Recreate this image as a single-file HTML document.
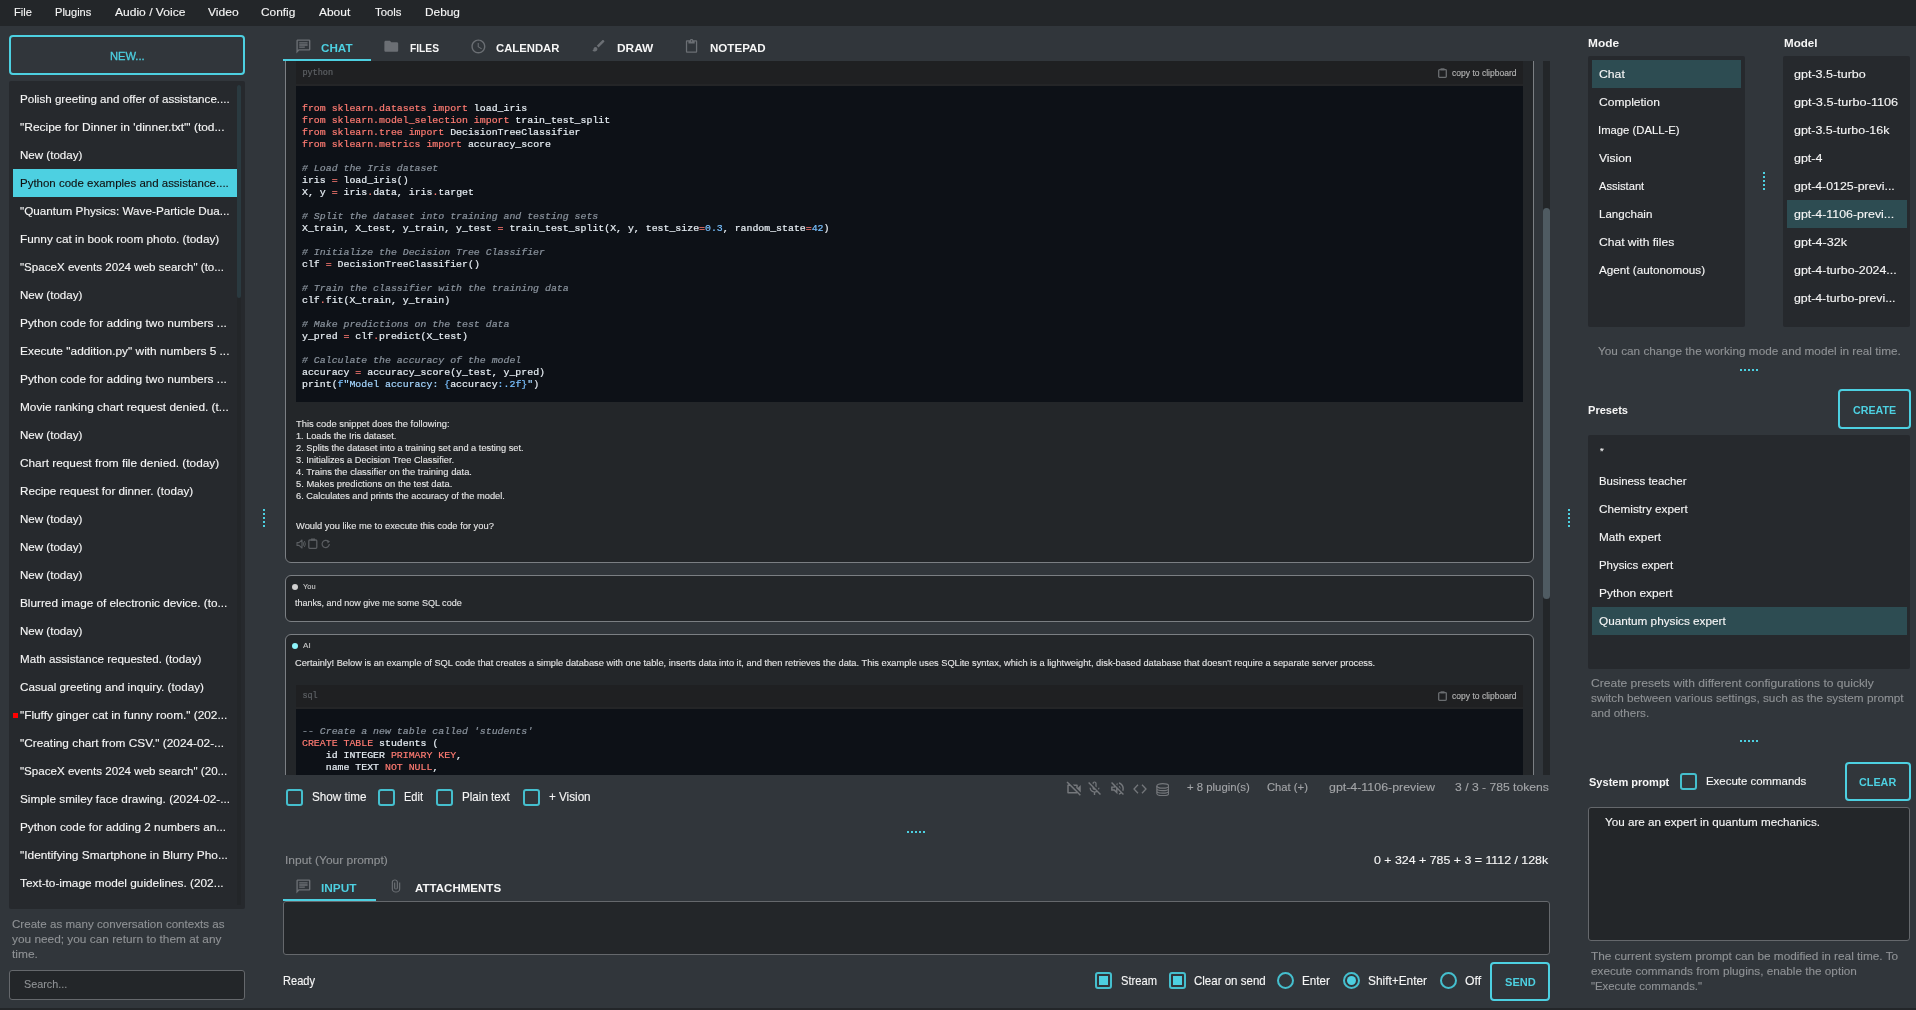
<!DOCTYPE html><html><head><meta charset="utf-8"><style>
html,body{margin:0;padding:0}
body{width:1916px;height:1010px;position:relative;overflow:hidden;background:#31363b;font-family:"Liberation Sans",sans-serif}
div,svg{position:absolute;box-sizing:content-box}
.t{white-space:pre;line-height:1;transform-origin:0 0;-webkit-text-stroke:0.12px}
.mo{-webkit-text-stroke:0.2px}
.bo{-webkit-text-stroke:0}
.t span{position:static}
</style></head><body><div style="left:0;top:0;width:1916px;height:1010px;background:#31363b;will-change:transform;overflow:hidden">
<div style="left:0px;top:0px;width:1916px;height:26px;background:#232629"></div>
<div class="t" style="left:14.40px;top:7px;font-size:11.4px;color:#f6f6f6;transform:scaleX(0.9767);">File</div>
<div class="t" style="left:55.40px;top:7px;font-size:11.4px;color:#f6f6f6;transform:scaleX(0.9718);">Plugins</div>
<div class="t" style="left:115.00px;top:7px;font-size:11.4px;color:#f6f6f6;transform:scaleX(1.0581);">Audio / Voice</div>
<div class="t" style="left:208.00px;top:7px;font-size:11.4px;color:#f6f6f6;transform:scaleX(1.0597);">Video</div>
<div class="t" style="left:261.40px;top:7px;font-size:11.4px;color:#f6f6f6;transform:scaleX(1.0402);">Config</div>
<div class="t" style="left:318.70px;top:7px;font-size:11.4px;color:#f6f6f6;transform:scaleX(1.0489);">About</div>
<div class="t" style="left:374.60px;top:7px;font-size:11.4px;color:#f6f6f6;transform:scaleX(0.9965);">Tools</div>
<div class="t" style="left:424.80px;top:7px;font-size:11.4px;color:#f6f6f6;transform:scaleX(1.0412);">Debug</div>
<div style="left:0px;top:1008px;width:1916px;height:2px;background:#232629"></div>
<div style="left:9px;top:35px;width:232px;height:36px;border:2px solid #4dd0e1;border-radius:4px"></div>
<div class="t" style="left:109.60px;top:51px;font-size:11.4px;color:#4dd0e1;transform:scaleX(0.9780);-webkit-text-stroke:0.3px;">NEW...</div>
<div style="left:9px;top:81px;width:236px;height:828px;background:#26292d;border-radius:2px"></div>
<div style="left:237px;top:85px;width:4px;height:820px;background:#232629"></div>
<div style="left:237px;top:85px;width:4px;height:213px;background:#2a3a40;border-radius:2px"></div>
<div class="t" style="left:20.20px;top:94px;font-size:11.4px;color:#f6f6f6;transform:scaleX(1.0204);">Polish greeting and offer of assistance....</div>
<div class="t" style="left:20.20px;top:122px;font-size:11.4px;color:#f6f6f6;transform:scaleX(1.0498);">&quot;Recipe for Dinner in &#x27;dinner.txt&#x27;&quot; (tod...</div>
<div class="t" style="left:20.20px;top:150px;font-size:11.4px;color:#f6f6f6;transform:scaleX(1.0145);">New (today)</div>
<div style="left:13px;top:169px;width:224px;height:28px;background:#4dd0e1"></div>
<div class="t" style="left:20.20px;top:178px;font-size:11.4px;color:#101010;transform:scaleX(1.0083);">Python code examples and assistance....</div>
<div class="t" style="left:20.20px;top:206px;font-size:11.4px;color:#f6f6f6;transform:scaleX(1.0285);">&quot;Quantum Physics: Wave-Particle Dua...</div>
<div class="t" style="left:20.20px;top:234px;font-size:11.4px;color:#f6f6f6;transform:scaleX(1.0354);">Funny cat in book room photo. (today)</div>
<div class="t" style="left:20.20px;top:262px;font-size:11.4px;color:#f6f6f6;transform:scaleX(1.0169);">&quot;SpaceX events 2024 web search&quot; (to...</div>
<div class="t" style="left:20.20px;top:290px;font-size:11.4px;color:#f6f6f6;transform:scaleX(1.0145);">New (today)</div>
<div class="t" style="left:20.20px;top:318px;font-size:11.4px;color:#f6f6f6;transform:scaleX(1.0433);">Python code for adding two numbers ...</div>
<div class="t" style="left:20.20px;top:346px;font-size:11.4px;color:#f6f6f6;transform:scaleX(1.0444);">Execute &quot;addition.py&quot; with numbers 5 ...</div>
<div class="t" style="left:20.20px;top:374px;font-size:11.4px;color:#f6f6f6;transform:scaleX(1.0433);">Python code for adding two numbers ...</div>
<div class="t" style="left:20.20px;top:402px;font-size:11.4px;color:#f6f6f6;transform:scaleX(1.0397);">Movie ranking chart request denied. (t...</div>
<div class="t" style="left:20.20px;top:430px;font-size:11.4px;color:#f6f6f6;transform:scaleX(1.0145);">New (today)</div>
<div class="t" style="left:20.20px;top:458px;font-size:11.4px;color:#f6f6f6;transform:scaleX(1.0383);">Chart request from file denied. (today)</div>
<div class="t" style="left:20.20px;top:486px;font-size:11.4px;color:#f6f6f6;transform:scaleX(1.0239);">Recipe request for dinner. (today)</div>
<div class="t" style="left:20.20px;top:514px;font-size:11.4px;color:#f6f6f6;transform:scaleX(1.0145);">New (today)</div>
<div class="t" style="left:20.20px;top:542px;font-size:11.4px;color:#f6f6f6;transform:scaleX(1.0145);">New (today)</div>
<div class="t" style="left:20.20px;top:570px;font-size:11.4px;color:#f6f6f6;transform:scaleX(1.0145);">New (today)</div>
<div class="t" style="left:20.20px;top:598px;font-size:11.4px;color:#f6f6f6;transform:scaleX(1.0328);">Blurred image of electronic device. (to...</div>
<div class="t" style="left:20.20px;top:626px;font-size:11.4px;color:#f6f6f6;transform:scaleX(1.0145);">New (today)</div>
<div class="t" style="left:20.20px;top:654px;font-size:11.4px;color:#f6f6f6;transform:scaleX(1.0195);">Math assistance requested. (today)</div>
<div class="t" style="left:20.20px;top:682px;font-size:11.4px;color:#f6f6f6;transform:scaleX(1.0238);">Casual greeting and inquiry. (today)</div>
<div style="left:13px;top:713px;width:5px;height:5px;background:#ff0000"></div>
<div class="t" style="left:20.20px;top:710px;font-size:11.4px;color:#f6f6f6;transform:scaleX(1.0378);">&quot;Fluffy ginger cat in funny room.&quot; (202...</div>
<div class="t" style="left:20.20px;top:738px;font-size:11.4px;color:#f6f6f6;transform:scaleX(1.0389);">&quot;Creating chart from CSV.&quot; (2024-02-...</div>
<div class="t" style="left:20.20px;top:766px;font-size:11.4px;color:#f6f6f6;transform:scaleX(1.0173);">&quot;SpaceX events 2024 web search&quot; (20...</div>
<div class="t" style="left:20.20px;top:794px;font-size:11.4px;color:#f6f6f6;transform:scaleX(1.0332);">Simple smiley face drawing. (2024-02-...</div>
<div class="t" style="left:20.20px;top:822px;font-size:11.4px;color:#f6f6f6;transform:scaleX(1.0331);">Python code for adding 2 numbers an...</div>
<div class="t" style="left:20.20px;top:850px;font-size:11.4px;color:#f6f6f6;transform:scaleX(1.0443);">&quot;Identifying Smartphone in Blurry Pho...</div>
<div class="t" style="left:20.20px;top:878px;font-size:11.4px;color:#f6f6f6;transform:scaleX(1.0367);">Text-to-image model guidelines. (202...</div>
<div class="t" style="left:12.20px;top:919px;font-size:11.4px;color:#8f9295;transform:scaleX(1.0170);">Create as many conversation contexts as</div>
<div class="t" style="left:12.20px;top:934px;font-size:11.4px;color:#8f9295;transform:scaleX(1.0403);">you need; you can return to them at any</div>
<div class="t" style="left:12.20px;top:949px;font-size:11.4px;color:#8f9295;transform:scaleX(1.0482);">time.</div>
<div style="left:9px;top:970px;width:234px;height:28px;background:#232629;border:1px solid #65686c;border-radius:3px"></div>
<div class="t" style="left:24.00px;top:979px;font-size:11.4px;color:#8f9295;transform:scaleX(0.9467);">Search...</div>
<div style="left:263px;top:509px;width:2px;height:2px;background:#4dd0e1"></div>
<div style="left:263px;top:513px;width:2px;height:2px;background:#4dd0e1"></div>
<div style="left:263px;top:517px;width:2px;height:2px;background:#4dd0e1"></div>
<div style="left:263px;top:521px;width:2px;height:2px;background:#4dd0e1"></div>
<div style="left:263px;top:525px;width:2px;height:2px;background:#4dd0e1"></div>
<!--tabs-->
<svg style="left:294.6px;top:37.6px" width="16.8" height="16.8" viewBox="0 0 24 24"><path fill="#6b6f74" d="M4 4h16v12H5.17L4 17.17V4m0-2c-1.1 0-1.99.9-1.99 2L2 22l4-4h14c1.1 0 2-.9 2-2V4c0-1.1-.9-2-2-2H4zm2 10h8v2H6v-2zm0-3h12v2H6V9zm0-3h12v2H6V6z"/></svg>
<svg style="left:382.6px;top:37.8px" width="16.56" height="16.56" viewBox="0 0 24 24"><path fill="#6b6f74" d="M10 4H4c-1.1 0-1.99.9-1.99 2L2 18c0 1.1.9 2 2 2h16c1.1 0 2-.9 2-2V8c0-1.1-.9-2-2-2h-8l-2-2z"/></svg>
<svg style="left:469.6px;top:37.6px" width="16.8" height="16.8" viewBox="0 0 24 24"><path fill="#6b6f74" d="M11.99 2C6.47 2 2 6.48 2 12s4.47 10 9.99 10C17.52 22 22 17.52 22 12S17.52 2 11.99 2zM12 20c-4.42 0-8-3.58-8-8s3.58-8 8-8 8 3.58 8 8-3.58 8-8 8zm.5-13H11v6l5.25 3.15.75-1.23-4.5-2.67z"/></svg>
<svg style="left:590.5px;top:38px" width="15.4" height="15.4" viewBox="0 0 24 24"><path fill="#6b6f74" d="M7 14c-1.66 0-3 1.34-3 3 0 1.31-1.16 2-2 2 .92 1.22 2.49 2 4 2 2.21 0 4-1.790 4-4 0-1.66-1.34-3-3-3zm13.710-9.370l-1.340-1.340c-.39-.39-1.020-.39-1.410 0L9 12.250 11.750 15l8.960-8.960c.39-.39.39-1.020 0-1.410z"/></svg>
<svg style="left:684.1px;top:38.6px" width="15.1" height="15.1" viewBox="0 0 24 24"><path fill="#6b6f74" d="M19 2h-4.18C14.4.84 13.3 0 12 0c-1.3 0-2.4.84-2.82 2H5c-1.1 0-2 .9-2 2v16c0 1.1.9 2 2 2h14c1.1 0 2-.9 2-2V4c0-1.1-.9-2-2-2zm-7 0c.55 0 1 .45 1 1s-.45 1-1 1-1-.45-1-1 .45-1 1-1zm7 18H5V4h2v3h10V4h2v16z"/></svg>
<div class="t bo" style="left:321.10px;top:43px;font-size:11.4px;color:#4dd0e1;font-weight:bold;transform:scaleX(1.0249);">CHAT</div>
<div class="t bo" style="left:409.70px;top:43px;font-size:11.4px;color:#f6f6f6;font-weight:bold;transform:scaleX(0.8966);">FILES</div>
<div class="t bo" style="left:496.00px;top:43px;font-size:11.4px;color:#f6f6f6;font-weight:bold;transform:scaleX(0.9924);">CALENDAR</div>
<div class="t bo" style="left:616.50px;top:43px;font-size:11.4px;color:#f6f6f6;font-weight:bold;transform:scaleX(1.0443);">DRAW</div>
<div class="t bo" style="left:710.40px;top:43px;font-size:11.4px;color:#f6f6f6;font-weight:bold;transform:scaleX(1.0161);">NOTEPAD</div>
<div style="left:283px;top:59px;width:88px;height:2px;background:#4dd0e1"></div>
<div style="left:0;top:0;width:1916px;height:1010px;clip-path:inset(61px 373px 235px 283px)">
<div style="left:285px;top:20px;width:1247px;height:541px;background:#232629;border:1px solid #7b7f83;border-radius:6px"></div>
<div style="left:296px;top:61px;width:1227px;height:23px;background:#1f2022"></div>
<div style="left:296px;top:84px;width:1227px;height:2px;background:#242527"></div>
<div style="left:296px;top:86px;width:1227px;height:316px;background:#0d1117"></div>
<div class="t mo" style="left:302.00px;top:104px;font-size:9.9px;color:#e6edf3;font-family:'Liberation Mono',monospace;"><span style="color:#ff7b72">from sklearn.datasets import</span> load_iris</div>
<div class="t mo" style="left:302.00px;top:116px;font-size:9.9px;color:#e6edf3;font-family:'Liberation Mono',monospace;"><span style="color:#ff7b72">from sklearn.model_selection import</span> train_test_split</div>
<div class="t mo" style="left:302.00px;top:128px;font-size:9.9px;color:#e6edf3;font-family:'Liberation Mono',monospace;"><span style="color:#ff7b72">from sklearn.tree import</span> DecisionTreeClassifier</div>
<div class="t mo" style="left:302.00px;top:140px;font-size:9.9px;color:#e6edf3;font-family:'Liberation Mono',monospace;"><span style="color:#ff7b72">from sklearn.metrics import</span> accuracy_score</div>
<div class="t mo" style="left:302.00px;top:164px;font-size:9.9px;color:#e6edf3;font-family:'Liberation Mono',monospace;"><span style="color:#8b949e;font-style:italic"># Load the Iris dataset</span></div>
<div class="t mo" style="left:302.00px;top:176px;font-size:9.9px;color:#e6edf3;font-family:'Liberation Mono',monospace;">iris <span style="color:#ff7b72">=</span> load_iris()</div>
<div class="t mo" style="left:302.00px;top:188px;font-size:9.9px;color:#e6edf3;font-family:'Liberation Mono',monospace;">X, y <span style="color:#ff7b72">=</span> iris<span style="color:#ff7b72">.</span>data, iris<span style="color:#ff7b72">.</span>target</div>
<div class="t mo" style="left:302.00px;top:212px;font-size:9.9px;color:#e6edf3;font-family:'Liberation Mono',monospace;"><span style="color:#8b949e;font-style:italic"># Split the dataset into training and testing sets</span></div>
<div class="t mo" style="left:302.00px;top:224px;font-size:9.9px;color:#e6edf3;font-family:'Liberation Mono',monospace;">X_train, X_test, y_train, y_test <span style="color:#ff7b72">=</span> train_test_split(X, y, test_size<span style="color:#ff7b72">=</span><span style="color:#79c0ff">0.3</span>, random_state<span style="color:#ff7b72">=</span><span style="color:#79c0ff">42</span>)</div>
<div class="t mo" style="left:302.00px;top:248px;font-size:9.9px;color:#e6edf3;font-family:'Liberation Mono',monospace;"><span style="color:#8b949e;font-style:italic"># Initialize the Decision Tree Classifier</span></div>
<div class="t mo" style="left:302.00px;top:260px;font-size:9.9px;color:#e6edf3;font-family:'Liberation Mono',monospace;">clf <span style="color:#ff7b72">=</span> DecisionTreeClassifier()</div>
<div class="t mo" style="left:302.00px;top:284px;font-size:9.9px;color:#e6edf3;font-family:'Liberation Mono',monospace;"><span style="color:#8b949e;font-style:italic"># Train the classifier with the training data</span></div>
<div class="t mo" style="left:302.00px;top:296px;font-size:9.9px;color:#e6edf3;font-family:'Liberation Mono',monospace;">clf<span style="color:#ff7b72">.</span>fit(X_train, y_train)</div>
<div class="t mo" style="left:302.00px;top:320px;font-size:9.9px;color:#e6edf3;font-family:'Liberation Mono',monospace;"><span style="color:#8b949e;font-style:italic"># Make predictions on the test data</span></div>
<div class="t mo" style="left:302.00px;top:332px;font-size:9.9px;color:#e6edf3;font-family:'Liberation Mono',monospace;">y_pred <span style="color:#ff7b72">=</span> clf<span style="color:#ff7b72">.</span>predict(X_test)</div>
<div class="t mo" style="left:302.00px;top:356px;font-size:9.9px;color:#e6edf3;font-family:'Liberation Mono',monospace;"><span style="color:#8b949e;font-style:italic"># Calculate the accuracy of the model</span></div>
<div class="t mo" style="left:302.00px;top:368px;font-size:9.9px;color:#e6edf3;font-family:'Liberation Mono',monospace;">accuracy <span style="color:#ff7b72">=</span> accuracy_score(y_test, y_pred)</div>
<div class="t mo" style="left:302.00px;top:380px;font-size:9.9px;color:#e6edf3;font-family:'Liberation Mono',monospace;">print(<span style="color:#79c0ff">f</span><span style="color:#a5d6ff">&quot;Model accuracy: </span><span style="color:#79c0ff">{</span>accuracy<span style="color:#79c0ff">:.2f}</span><span style="color:#a5d6ff">&quot;</span>)</div>
<div class="t mo" style="left:302.40px;top:69px;font-size:8.5px;color:#5d6064;font-family:'Liberation Mono',monospace;">python</div>
<svg style="left:1438px;top:68px" width="9" height="10" viewBox="0 0 9 10"><rect x="0.7" y="1.7" width="7.6" height="7.6" rx="0.8" fill="none" stroke="#6a6d70" stroke-width="1.3"/><rect x="2.5" y="0.3" width="4" height="2" fill="#6a6d70"/></svg>
<div class="t" style="left:1452.00px;top:70px;font-size:8.2px;color:#b5b5b5;transform:scaleX(1.0426);">copy to clipboard</div>
<div class="t" style="left:295.50px;top:419px;font-size:9.6px;color:#e4e4e4;transform:scaleX(0.9766);">This code snippet does the following:</div>
<div class="t" style="left:295.50px;top:431px;font-size:9.6px;color:#e4e4e4;transform:scaleX(0.9540);">1. Loads the Iris dataset.</div>
<div class="t" style="left:295.50px;top:443px;font-size:9.6px;color:#e4e4e4;transform:scaleX(0.9657);">2. Splits the dataset into a training set and a testing set.</div>
<div class="t" style="left:295.50px;top:455px;font-size:9.6px;color:#e4e4e4;transform:scaleX(0.9657);">3. Initializes a Decision Tree Classifier.</div>
<div class="t" style="left:295.50px;top:467px;font-size:9.6px;color:#e4e4e4;transform:scaleX(0.9763);">4. Trains the classifier on the training data.</div>
<div class="t" style="left:295.50px;top:479px;font-size:9.6px;color:#e4e4e4;transform:scaleX(0.9799);">5. Makes predictions on the test data.</div>
<div class="t" style="left:295.50px;top:491px;font-size:9.6px;color:#e4e4e4;transform:scaleX(0.9698);">6. Calculates and prints the accuracy of the model.</div>
<div class="t" style="left:295.50px;top:521px;font-size:9.6px;color:#e4e4e4;transform:scaleX(0.9720);">Would you like me to execute this code for you?</div>
<svg style="left:296px;top:539px" width="10" height="10" viewBox="0 0 10 10"><path d="M1 3.6h2l3-2.6v8l-3-2.6h-2z" fill="none" stroke="#5a5d61" stroke-width="1.1" stroke-linejoin="round"/><path d="M7.2 3.2q1.2 1.8 0 3.6M8.4 2q2 3 0 6" fill="none" stroke="#5a5d61" stroke-width="0.9"/></svg>
<svg style="left:308px;top:538px" width="10" height="11" viewBox="0 0 10 11"><rect x="0.8" y="2" width="8" height="8.3" rx="1" fill="none" stroke="#5a5d61" stroke-width="1.3"/><rect x="3" y="0.5" width="4" height="2.2" fill="#5a5d61"/></svg>
<svg style="left:320.5px;top:539px" width="10" height="10" viewBox="0 0 10 10"><path d="M8.3 5a3.6 3.6 0 1 1-1.1-2.6" fill="none" stroke="#5a5d61" stroke-width="1.2"/><path d="M6 0.8l3 1.6-2.4 2.2z" fill="#5a5d61"/></svg>
<div style="left:285px;top:575px;width:1247px;height:45px;background:#232629;border:1px solid #7b7f83;border-radius:6px"></div>
<div style="left:292px;top:584px;width:6px;height:6px;background:#cfcfcf;border-radius:50%"></div>
<div class="t" style="left:303.00px;top:583px;font-size:7.6px;color:#c8c8c8;transform:scaleX(0.9769);">You</div>
<div class="t" style="left:295.40px;top:598px;font-size:9.6px;color:#e4e4e4;transform:scaleX(0.9405);">thanks, and now give me some SQL code</div>
<div style="left:285px;top:634px;width:1247px;height:200px;background:#232629;border:1px solid #7b7f83;border-radius:6px"></div>
<div style="left:292px;top:643px;width:6px;height:6px;background:#8ef4fb;border-radius:50%"></div>
<div class="t" style="left:303.00px;top:642px;font-size:7.6px;color:#c8c8c8;transform:scaleX(1.0616);">AI</div>
<div class="t" style="left:295.40px;top:658px;font-size:9.6px;color:#e4e4e4;transform:scaleX(0.9648);">Certainly! Below is an example of SQL code that creates a simple database with one table, inserts data into it, and then retrieves the data. This example uses SQLite syntax, which is a lightweight, disk-based database that doesn&#39;t require a separate server process.</div>
<div style="left:296px;top:685px;width:1227px;height:22px;background:#1f2022"></div>
<div style="left:296px;top:707px;width:1227px;height:2px;background:#242527"></div>
<div style="left:296px;top:709px;width:1227px;height:80px;background:#0d1117"></div>
<div class="t mo" style="left:302.40px;top:692px;font-size:8.5px;color:#5d6064;font-family:'Liberation Mono',monospace;">sql</div>
<svg style="left:1438px;top:691px" width="9" height="10" viewBox="0 0 9 10"><rect x="0.7" y="1.7" width="7.6" height="7.6" rx="0.8" fill="none" stroke="#6a6d70" stroke-width="1.3"/><rect x="2.5" y="0.3" width="4" height="2" fill="#6a6d70"/></svg>
<div class="t" style="left:1452.00px;top:693px;font-size:8.2px;color:#b5b5b5;transform:scaleX(1.0426);">copy to clipboard</div>
<div class="t mo" style="left:302.00px;top:727px;font-size:9.9px;color:#e6edf3;font-family:'Liberation Mono',monospace;"><span style="color:#8b949e;font-style:italic">-- Create a new table called &#x27;students&#x27;</span></div>
<div class="t mo" style="left:302.00px;top:739px;font-size:9.9px;color:#e6edf3;font-family:'Liberation Mono',monospace;"><span style="color:#ff7b72">CREATE TABLE</span> students (</div>
<div class="t mo" style="left:302.00px;top:751px;font-size:9.9px;color:#e6edf3;font-family:'Liberation Mono',monospace;">    id INTEGER <span style="color:#ff7b72">PRIMARY KEY</span>,</div>
<div class="t mo" style="left:302.00px;top:763px;font-size:9.9px;color:#e6edf3;font-family:'Liberation Mono',monospace;">    name TEXT <span style="color:#ff7b72">NOT NULL</span>,</div>
</div>
<div style="left:1543px;top:61px;width:7px;height:714px;background:#232629"></div>
<div style="left:1543px;top:208px;width:7px;height:391px;background:#4f5b62;border-radius:4px"></div>
<div style="left:286px;top:789px;width:13px;height:13px;border:2px solid #45bfce;border-radius:3px"></div>
<div class="t" style="left:312.00px;top:792px;font-size:11.9px;color:#f6f6f6;transform:scaleX(0.9839);">Show time</div>
<div style="left:378px;top:789px;width:13px;height:13px;border:2px solid #45bfce;border-radius:3px"></div>
<div class="t" style="left:404.00px;top:792px;font-size:11.9px;color:#f6f6f6;transform:scaleX(0.9299);">Edit</div>
<div style="left:436px;top:789px;width:13px;height:13px;border:2px solid #45bfce;border-radius:3px"></div>
<div class="t" style="left:462.00px;top:792px;font-size:11.9px;color:#f6f6f6;transform:scaleX(0.9777);">Plain text</div>
<div style="left:523px;top:789px;width:13px;height:13px;border:2px solid #45bfce;border-radius:3px"></div>
<div class="t" style="left:548.70px;top:792px;font-size:11.9px;color:#f6f6f6;transform:scaleX(0.9807);">+ Vision</div>
<svg style="left:1064.5px;top:779.5px" width="18" height="18" viewBox="0 0 24 24"><path fill="#74777b" d="M9.56 8l-2-2-4.150-4.140L2 3.270 4.730 6H4c-.550 0-1 .450-1 1v10c0 .550.450 1 1 1h12c.210 0 .390-.080.550-.180L19.730 21l1.410-1.410-8.860-8.860L9.560 8zM5 16V8h1.730l8 8H5zm10-8v2.610l6 6V6.500l-4 4V7c0-.550-.450-1-1-1h-5.610l2 2H15z"/></svg>
<svg style="left:1086px;top:779.5px" width="17" height="17" viewBox="0 0 24 24"><path fill="#74777b" d="M10.800 4.900c0-.660.540-1.200 1.200-1.200s1.200.540 1.200 1.200l-.010 3.910L15 10.600V5c0-1.660-1.340-3-3-3-1.540 0-2.790 1.160-2.960 2.650l1.760 1.760V4.900zM19 11h-1.700c0 .580-.100 1.130-.270 1.640l1.270 1.270c.440-.880.700-1.870.700-2.910zM4.410 2.860L3 4.270l6 6V11c0 1.660 1.340 3 3 3 .230 0 .440-.030.650-.080l1.660 1.660c-.710.330-1.500.520-2.310.520-2.760 0-5.300-2.100-5.300-5.100H5c0 3.410 2.720 6.230 6 6.720V21h2v-3.280c.910-.130 1.770-.450 2.550-.900l4.200 4.200 1.410-1.410L4.410 2.860z"/></svg>
<svg style="left:1108.5px;top:780px" width="17" height="17" viewBox="0 0 24 24"><path fill="#74777b" d="M4.340 2.930L2.930 4.340 7.290 8.700 7 9H3v6h4l5 5v-6.590l4.180 4.180c-.650.490-1.380.880-2.180 1.110v2.060c1.340-.300 2.570-.920 3.610-1.750l2.050 2.050 1.410-1.410L4.340 2.930zM10 15.170L7.830 13H5v-2h2.830l.880-.880L10 11.410v3.760zM19 12c0 .820-.150 1.610-.410 2.340l1.530 1.530c.560-1.170.880-2.480.880-3.870 0-4.280-2.990-7.860-7-8.770v2.060c2.890.860 5 3.540 5 6.710zm-7-8l-1.880 1.880L12 7.760zm4.500 8c0-1.770-1.020-3.290-2.500-4.030v1.790l2.480 2.480c.010-.080.020-.160.020-.240z"/></svg>
<svg style="left:1133px;top:784px" width="14" height="10" viewBox="0 0 14 10"><path d="M5 .8L1 5l4 4.2M9 .8l4 4.2-4 4.2" fill="none" stroke="#74777b" stroke-width="1.3"/></svg>
<svg style="left:1155.5px;top:782.5px" width="13.5" height="13.5" viewBox="0 0 13.5 13.5"><ellipse cx="6.75" cy="2.9" rx="5.9" ry="2.2" fill="none" stroke="#74777b" stroke-width="1.2"/><path d="M.85 2.9v7.6q0 2.2 5.9 2.2t5.9-2.2v-7.6M.85 5.5q0 2.2 5.9 2.2t5.9-2.2M.85 8q0 2.2 5.9 2.2t5.9-2.2" fill="none" stroke="#74777b" stroke-width="1.2"/></svg>
<div class="t" style="left:1187.00px;top:782px;font-size:11.4px;color:#a3a5a8;transform:scaleX(0.9967);">+ 8 plugin(s)</div>
<div class="t" style="left:1266.60px;top:782px;font-size:11.4px;color:#a3a5a8;transform:scaleX(0.9863);">Chat (+)</div>
<div class="t" style="left:1328.90px;top:782px;font-size:11.4px;color:#a3a5a8;transform:scaleX(1.0880);">gpt-4-1106-preview</div>
<div class="t" style="left:1455.30px;top:782px;font-size:11.4px;color:#a3a5a8;transform:scaleX(1.0666);">3 / 3 - 785 tokens</div>
<div style="left:907px;top:831px;width:2px;height:2px;background:#4dd0e1"></div>
<div style="left:911px;top:831px;width:2px;height:2px;background:#4dd0e1"></div>
<div style="left:915px;top:831px;width:2px;height:2px;background:#4dd0e1"></div>
<div style="left:919px;top:831px;width:2px;height:2px;background:#4dd0e1"></div>
<div style="left:923px;top:831px;width:2px;height:2px;background:#4dd0e1"></div>
<div class="t" style="left:285.25px;top:855px;font-size:11.4px;color:#8f9295;transform:scaleX(1.0524);">Input (Your prompt)</div>
<div class="t" style="left:1373.50px;top:855px;font-size:11.4px;color:#f6f6f6;transform:scaleX(1.0855);">0 + 324 + 785 + 3 = 1112 / 128k</div>
<svg style="left:294.6px;top:877.6px" width="16.8" height="16.8" viewBox="0 0 24 24"><path fill="#6b6f74" d="M4 4h16v12H5.17L4 17.17V4m0-2c-1.1 0-1.99.9-1.99 2L2 22l4-4h14c1.1 0 2-.9 2-2V4c0-1.1-.9-2-2-2H4zm2 10h8v2H6v-2zm0-3h12v2H6V9zm0-3h12v2H6V6z"/></svg>
<svg style="left:391px;top:879px" width="10" height="14" viewBox="6 0 13 24" preserveAspectRatio="none"><path fill="#6b6f74" d="M16.5 6v11.5c0 2.210-1.790 4-4 4s-4-1.790-4-4V5c0-1.380 1.120-2.500 2.500-2.500s2.500 1.120 2.500 2.500v10.500c0 .550-.450 1-1 1s-1-.450-1-1V6H10v9.500c0 1.380 1.120 2.500 2.500 2.500s2.500-1.120 2.500-2.500V5c0-2.210-1.790-4-4-4S7 2.790 7 5v12.500c0 3.040 2.460 5.500 5.500 5.500s5.500-2.460 5.500-5.500V6h-1.500z"/></svg>
<div class="t bo" style="left:321.40px;top:883px;font-size:11.4px;color:#4dd0e1;font-weight:bold;transform:scaleX(1.0405);">INPUT</div>
<div class="t bo" style="left:414.70px;top:883px;font-size:11.4px;color:#f6f6f6;font-weight:bold;transform:scaleX(1.0129);">ATTACHMENTS</div>
<div style="left:283px;top:901px;width:1265px;height:52px;background:#232629;border:1px solid #65686c;border-radius:3px"></div>
<div style="left:283px;top:899px;width:93px;height:2px;background:#4dd0e1"></div>
<div class="t" style="left:283.40px;top:976px;font-size:11.9px;color:#f6f6f6;transform:scaleX(0.9295);">Ready</div>
<div style="left:1095px;top:972px;width:13px;height:13px;border:2px solid #45bfce;border-radius:3px"></div>
<div style="left:1099px;top:976px;width:9px;height:9px;background:#4dd0e1"></div>
<div class="t" style="left:1121.20px;top:976px;font-size:11.9px;color:#f6f6f6;transform:scaleX(0.9370);">Stream</div>
<div style="left:1168.5px;top:972px;width:13px;height:13px;border:2px solid #45bfce;border-radius:3px"></div>
<div style="left:1172.5px;top:976px;width:9px;height:9px;background:#4dd0e1"></div>
<div class="t" style="left:1194.40px;top:976px;font-size:11.9px;color:#f6f6f6;transform:scaleX(0.9684);">Clear on send</div>
<div style="left:1277px;top:972px;width:13px;height:13px;border:2px solid #45bfce;border-radius:50%"></div>
<div class="t" style="left:1302.20px;top:976px;font-size:11.9px;color:#f6f6f6;transform:scaleX(0.9838);">Enter</div>
<div style="left:1342.7px;top:972px;width:13px;height:13px;border:2px solid #45bfce;border-radius:50%"></div>
<div style="left:1346.7px;top:976px;width:9px;height:9px;background:#4dd0e1;border-radius:50%"></div>
<div class="t" style="left:1368.20px;top:976px;font-size:11.9px;color:#f6f6f6;transform:scaleX(0.9984);">Shift+Enter</div>
<div style="left:1439.8px;top:972px;width:13px;height:13px;border:2px solid #45bfce;border-radius:50%"></div>
<div class="t" style="left:1465.10px;top:976px;font-size:11.9px;color:#f6f6f6;transform:scaleX(1.0283);">Off</div>
<div style="left:1490px;top:962px;width:56px;height:35px;border:2px solid #4dd0e1;border-radius:4px"></div>
<div class="t bo" style="left:1504.50px;top:977px;font-size:11.4px;color:#4dd0e1;font-weight:bold;transform:scaleX(0.9739);">SEND</div>
<div style="left:1568px;top:509px;width:2px;height:2px;background:#4dd0e1"></div>
<div style="left:1568px;top:513px;width:2px;height:2px;background:#4dd0e1"></div>
<div style="left:1568px;top:517px;width:2px;height:2px;background:#4dd0e1"></div>
<div style="left:1568px;top:521px;width:2px;height:2px;background:#4dd0e1"></div>
<div style="left:1568px;top:525px;width:2px;height:2px;background:#4dd0e1"></div>
<div class="t bo" style="left:1588.40px;top:38px;font-size:11.4px;color:#f6f6f6;font-weight:bold;transform:scaleX(1.0441);">Mode</div>
<div class="t bo" style="left:1783.50px;top:38px;font-size:11.4px;color:#f6f6f6;font-weight:bold;transform:scaleX(1.0171);">Model</div>
<div style="left:1588px;top:56px;width:157px;height:271px;background:#26292d;border-radius:2px"></div>
<div style="left:1783px;top:56px;width:127px;height:271px;background:#26292d;border-radius:2px"></div>
<div style="left:1592px;top:60px;width:149px;height:28px;background:#2d4c52"></div>
<div class="t" style="left:1599.30px;top:69px;font-size:11.4px;color:#f6f6f6;transform:scaleX(1.0725);">Chat</div>
<div class="t" style="left:1599.30px;top:97px;font-size:11.4px;color:#f6f6f6;transform:scaleX(1.0580);">Completion</div>
<div class="t" style="left:1598.31px;top:125px;font-size:11.4px;color:#f6f6f6;transform:scaleX(0.9902);">Image (DALL-E)</div>
<div class="t" style="left:1599.30px;top:153px;font-size:11.4px;color:#f6f6f6;transform:scaleX(1.0629);">Vision</div>
<div class="t" style="left:1599.30px;top:181px;font-size:11.4px;color:#f6f6f6;transform:scaleX(0.9777);">Assistant</div>
<div class="t" style="left:1599.30px;top:209px;font-size:11.4px;color:#f6f6f6;transform:scaleX(1.0146);">Langchain</div>
<div class="t" style="left:1599.30px;top:237px;font-size:11.4px;color:#f6f6f6;transform:scaleX(1.0603);">Chat with files</div>
<div class="t" style="left:1599.30px;top:265px;font-size:11.4px;color:#f6f6f6;transform:scaleX(1.0279);">Agent (autonomous)</div>
<div style="left:1787px;top:200px;width:120px;height:28px;background:#2d4c52"></div>
<div class="t" style="left:1794.20px;top:69px;font-size:11.4px;color:#f6f6f6;transform:scaleX(1.1004);">gpt-3.5-turbo</div>
<div class="t" style="left:1794.20px;top:97px;font-size:11.4px;color:#f6f6f6;transform:scaleX(1.1141);">gpt-3.5-turbo-1106</div>
<div class="t" style="left:1794.20px;top:125px;font-size:11.4px;color:#f6f6f6;transform:scaleX(1.0915);">gpt-3.5-turbo-16k</div>
<div class="t" style="left:1794.20px;top:153px;font-size:11.4px;color:#f6f6f6;transform:scaleX(1.0926);">gpt-4</div>
<div class="t" style="left:1794.20px;top:181px;font-size:11.4px;color:#f6f6f6;transform:scaleX(1.0828);">gpt-4-0125-previ...</div>
<div class="t" style="left:1794.20px;top:209px;font-size:11.4px;color:#f6f6f6;transform:scaleX(1.0862);">gpt-4-1106-previ...</div>
<div class="t" style="left:1794.20px;top:237px;font-size:11.4px;color:#f6f6f6;transform:scaleX(1.1007);">gpt-4-32k</div>
<div class="t" style="left:1794.20px;top:265px;font-size:11.4px;color:#f6f6f6;transform:scaleX(1.0883);">gpt-4-turbo-2024...</div>
<div class="t" style="left:1794.20px;top:293px;font-size:11.4px;color:#f6f6f6;transform:scaleX(1.0831);">gpt-4-turbo-previ...</div>
<div style="left:1763px;top:172px;width:2px;height:2px;background:#4dd0e1"></div>
<div style="left:1763px;top:176px;width:2px;height:2px;background:#4dd0e1"></div>
<div style="left:1763px;top:180px;width:2px;height:2px;background:#4dd0e1"></div>
<div style="left:1763px;top:184px;width:2px;height:2px;background:#4dd0e1"></div>
<div style="left:1763px;top:188px;width:2px;height:2px;background:#4dd0e1"></div>
<div class="t" style="left:1598.00px;top:346px;font-size:11.4px;color:#8f9295;transform:scaleX(1.0342);">You can change the working mode and model in real time.</div>
<div style="left:1740px;top:369px;width:2px;height:2px;background:#4dd0e1"></div>
<div style="left:1744px;top:369px;width:2px;height:2px;background:#4dd0e1"></div>
<div style="left:1748px;top:369px;width:2px;height:2px;background:#4dd0e1"></div>
<div style="left:1752px;top:369px;width:2px;height:2px;background:#4dd0e1"></div>
<div style="left:1756px;top:369px;width:2px;height:2px;background:#4dd0e1"></div>
<div class="t bo" style="left:1588.40px;top:405px;font-size:11.4px;color:#f6f6f6;font-weight:bold;transform:scaleX(0.9724);">Presets</div>
<div style="left:1838px;top:389px;width:69px;height:36px;border:2px solid #4dd0e1;border-radius:4px"></div>
<div class="t bo" style="left:1852.60px;top:405px;font-size:11.4px;color:#4dd0e1;font-weight:bold;transform:scaleX(0.9399);">CREATE</div>
<div style="left:1588px;top:435px;width:322px;height:234px;background:#26292d;border-radius:2px"></div>
<div style="left:1592px;top:607px;width:315px;height:28px;background:#2d4c52"></div>
<div class="t" style="left:1600.00px;top:446px;font-size:9.5px;color:#f6f6f6;">*</div>
<div class="t" style="left:1599.00px;top:476px;font-size:11.4px;color:#f6f6f6;transform:scaleX(1.0013);">Business teacher</div>
<div class="t" style="left:1599.00px;top:504px;font-size:11.4px;color:#f6f6f6;transform:scaleX(1.0297);">Chemistry expert</div>
<div class="t" style="left:1599.00px;top:532px;font-size:11.4px;color:#f6f6f6;transform:scaleX(1.0331);">Math expert</div>
<div class="t" style="left:1599.00px;top:560px;font-size:11.4px;color:#f6f6f6;transform:scaleX(1.0000);">Physics expert</div>
<div class="t" style="left:1599.00px;top:588px;font-size:11.4px;color:#f6f6f6;transform:scaleX(1.0475);">Python expert</div>
<div class="t" style="left:1599.00px;top:616px;font-size:11.4px;color:#f6f6f6;transform:scaleX(1.0319);">Quantum physics expert</div>
<div class="t" style="left:1591.30px;top:678px;font-size:11.4px;color:#8f9295;transform:scaleX(1.0588);">Create presets with different configurations to quickly</div>
<div class="t" style="left:1591.30px;top:693px;font-size:11.4px;color:#8f9295;transform:scaleX(1.0328);">switch between various settings, such as the system prompt</div>
<div class="t" style="left:1591.30px;top:708px;font-size:11.4px;color:#8f9295;transform:scaleX(1.0206);">and others.</div>
<div style="left:1740px;top:740px;width:2px;height:2px;background:#4dd0e1"></div>
<div style="left:1744px;top:740px;width:2px;height:2px;background:#4dd0e1"></div>
<div style="left:1748px;top:740px;width:2px;height:2px;background:#4dd0e1"></div>
<div style="left:1752px;top:740px;width:2px;height:2px;background:#4dd0e1"></div>
<div style="left:1756px;top:740px;width:2px;height:2px;background:#4dd0e1"></div>
<div class="t bo" style="left:1588.50px;top:777px;font-size:11.4px;color:#f6f6f6;font-weight:bold;transform:scaleX(0.9684);">System prompt</div>
<div style="left:1679.5px;top:772.7px;width:13px;height:13px;border:2px solid #45bfce;border-radius:3px"></div>
<div class="t" style="left:1705.60px;top:776px;font-size:11.4px;color:#f6f6f6;transform:scaleX(1.0026);">Execute commands</div>
<div style="left:1845px;top:761.5px;width:62px;height:35px;border:2px solid #4dd0e1;border-radius:4px"></div>
<div class="t bo" style="left:1859.00px;top:777px;font-size:11.4px;color:#4dd0e1;font-weight:bold;transform:scaleX(0.9485);">CLEAR</div>
<div style="left:1588px;top:807px;width:320px;height:132px;background:#232629;border:1px solid #65686c;border-radius:3px"></div>
<div class="t" style="left:1605.00px;top:817px;font-size:11.4px;color:#f6f6f6;transform:scaleX(1.0246);">You are an expert in quantum mechanics.</div>
<div class="t" style="left:1591.30px;top:951px;font-size:11.4px;color:#8f9295;transform:scaleX(1.0351);">The current system prompt can be modified in real time. To</div>
<div class="t" style="left:1591.30px;top:966px;font-size:11.4px;color:#8f9295;transform:scaleX(1.0316);">execute commands from plugins, enable the option</div>
<div class="t" style="left:1591.30px;top:981px;font-size:11.4px;color:#8f9295;transform:scaleX(0.9979);">&quot;Execute commands.&quot;</div>
</div></body></html>
